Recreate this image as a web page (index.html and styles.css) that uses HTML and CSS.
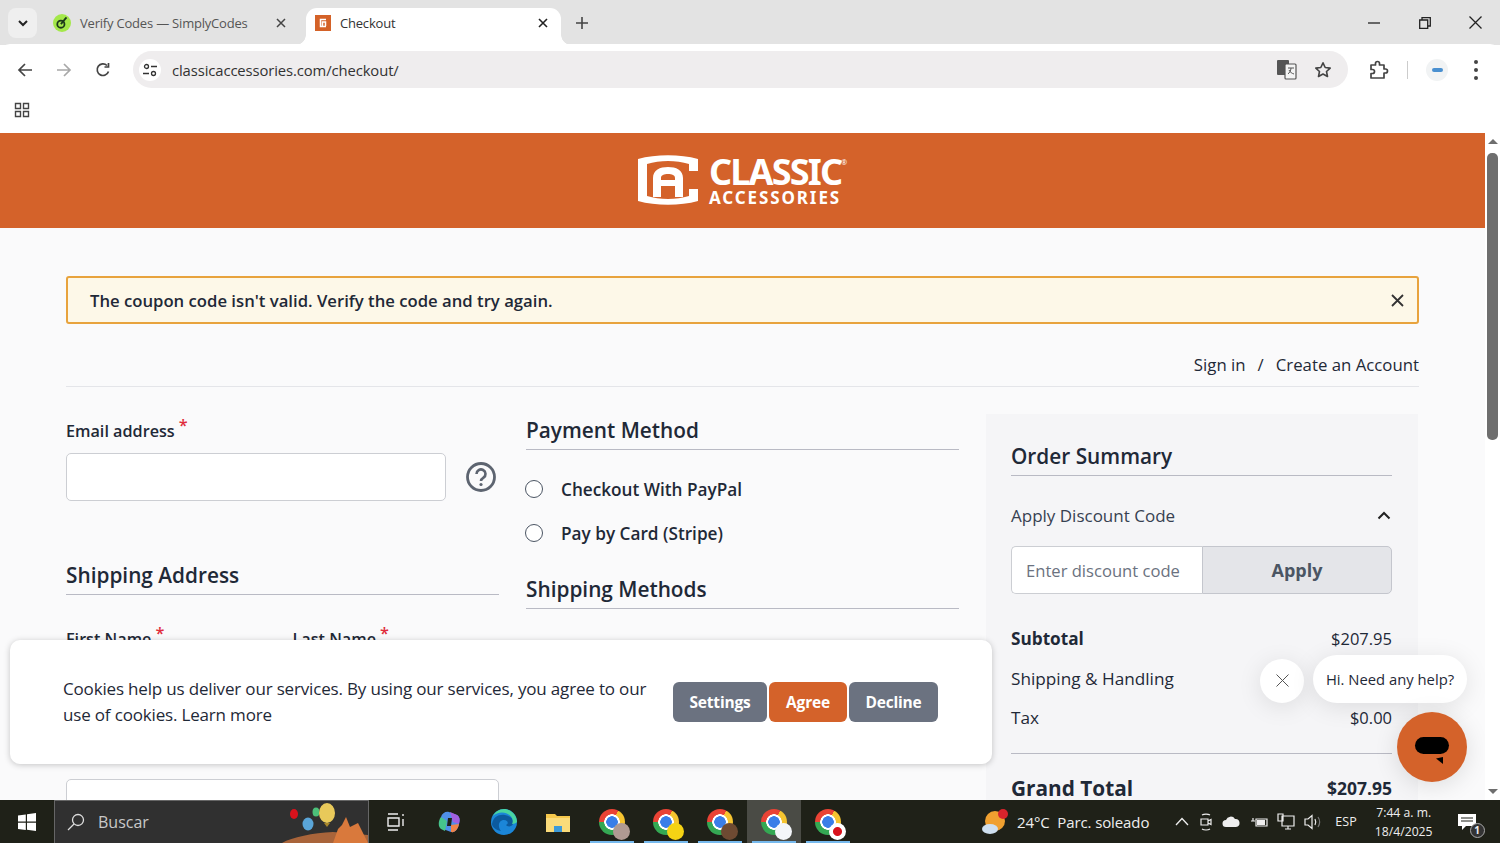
FILE: index.html
```html
<!DOCTYPE html>
<html lang="en">
<head>
    <meta charset="UTF-8">
    <title>Checkout</title>
    <link rel="stylesheet" href="styles.css">
</head>
<body>

    <!-- Browser tabs -->
    <div class="tabstrip">
        <div class="tab-search">
            <svg width="12" height="12" viewBox="0 0 12 12"><path d="M2 4l4 4 4-4" fill="none" stroke="#222" stroke-width="2"/></svg>
        </div>
        <div class="tab">
            <svg class="favicon" width="18" height="18" viewBox="0 0 16 16"><circle cx="8" cy="8" r="8" fill="#a4e84a"/><circle cx="7" cy="9" r="3.2" fill="none" stroke="#1d3a1a" stroke-width="1.6"/><path d="M7 9l5-6" stroke="#1d3a1a" stroke-width="1.6"/></svg>
            <span class="tab-title">Verify Codes — SimplyCodes</span>
            <svg class="tab-close" width="10" height="10" viewBox="0 0 10 10"><path d="M1 1l8 8M9 1l-8 8" stroke="#444" stroke-width="1.5"/></svg>
        </div>
        <div class="tab tab-active">
            <svg class="favicon" width="16" height="16" viewBox="0 0 16 16"><rect width="16" height="16" fill="#d46228"/><path d="M11 4.500H5.500v7H11M7.500 11V7h3v4" fill="none" stroke="#fff" stroke-width="1.5"/></svg>
            <span class="tab-title">Checkout</span>
            <svg class="tab-close" width="10" height="10" viewBox="0 0 10 10"><path d="M1 1l8 8M9 1l-8 8" stroke="#222" stroke-width="1.6"/></svg>
        </div>
        <svg class="new-tab" width="12" height="12" viewBox="0 0 12 12"><path d="M6 0v12M0 6h12" stroke="#444" stroke-width="1.6"/></svg>
        <div class="window-buttons">
            <svg width="12" height="12" viewBox="0 0 12 12"><path d="M0 6h12" stroke="#222" stroke-width="1.3"/></svg>
            <svg width="12" height="12" viewBox="0 0 12 12"><path d="M.7 3h8v8.300h-8zM3 3V.7h8.300V9H8.700" fill="none" stroke="#222" stroke-width="1.300"/></svg>
            <svg width="13" height="13" viewBox="0 0 13 13"><path d="M.5.5l12 12M12.500.5l-12 12" stroke="#222" stroke-width="1.300"/></svg>
        </div>
    </div>

    <!-- Address bar -->
    <div class="toolbar">
        <svg class="nav-icon" width="16" height="16" viewBox="0 0 16 16"><path d="M15 8H2M8 2L2 8l6 6" fill="none" stroke="#444" stroke-width="1.700"/></svg>
        <svg class="nav-icon" width="16" height="16" viewBox="0 0 16 16"><path d="M1 8h13M8 2l6 6-6 6" fill="none" stroke="#a8a8a8" stroke-width="1.700"/></svg>
        <svg class="nav-icon" width="16" height="16" viewBox="0 0 16 16"><path d="M13.500 9.500A5.800 5.800 0 1 1 12 3.500M13.500 1v4h-4" fill="none" stroke="#444" stroke-width="1.700"/></svg>
        <div class="omnibox">
            <span class="site-info">
                <svg width="14" height="14" viewBox="0 0 14 14"><circle cx="3.500" cy="3.500" r="2" fill="none" stroke="#333" stroke-width="1.300"/><path d="M8 3.500h6M0 10.500h6" stroke="#333" stroke-width="1.300"/><circle cx="10.500" cy="10.500" r="2" fill="none" stroke="#333" stroke-width="1.300"/></svg>
            </span>
            <span class="url">classicaccessories.com/checkout/</span>
            <svg class="omni-translate" width="20" height="20" viewBox="0 0 20 20"><rect x="0" y="0" width="12" height="15" rx="1" fill="#555"/><rect x="8" y="4" width="11" height="15" rx="1" fill="#f4f4f4" stroke="#555" stroke-width="1.200"/><path d="M3 7.500h5M11 8h6M14 8c0 3-2 5-3 6M12 10c1 2 3 3.500 5 4" fill="none" stroke="#555" stroke-width="1"/></svg>
            <svg class="omni-star" width="18" height="18" viewBox="0 0 18 18"><path d="M9 1.800l2.200 4.700 5 .6-3.700 3.400 1 5L9 13l-4.500 2.500 1-5L1.800 7.100l5-.6z" fill="none" stroke="#444" stroke-width="1.600" stroke-linejoin="round"/></svg>
        </div>
        <svg class="extensions" width="20" height="20" viewBox="0 0 20 20"><path d="M2 5h4.500V3.500a2 2 0 0 1 4 0V5H15v4h1.500a2 2 0 0 1 0 4H15v5H2v-4.500h1.500a2 2 0 0 0 0-4H2z" fill="none" stroke="#444" stroke-width="1.700" stroke-linejoin="round"/></svg>
        <span class="toolbar-sep"></span>
        <span class="profile"><span class="profile-dot"></span></span>
        <span class="menu-dots"><i></i><i></i><i></i></span>
    </div>

    <!-- Bookmarks bar -->
    <div class="bookmarks">
        <svg width="16" height="16" viewBox="0 0 16 16"><path d="M1.500 1.500h5v5h-5zM9.500 1.500h5v5h-5zM1.500 9.500h5v5h-5zM9.500 9.500h5v5h-5z" fill="none" stroke="#444" stroke-width="1.400"/></svg>
    </div>

    <!-- Page viewport -->
    <div class="viewport">
        <div class="page">
            <header class="site-header">
                <div class="logo">
                    <svg class="logo-mark" width="60" height="54" viewBox="0 0 60 54">
                        <path d="M0 6C18 1 42 1 60 6V18H51V11C38 7 22 7 9 11V43C22 47 38 47 51 43V36H60V48C42 53 18 53 0 48Z" fill="#fff"/>
                        <path d="M15 44V25C15 17 22 14 30 14 38 14 45 17 45 25V44H37V33H23V44ZM23 27H37V25C37 22 34 21 30 21S23 22 23 25Z" fill="#fff"/>
                    </svg>
                    <div class="logo-text">
                        <span class="logo-classic">CLASSIC<sup>®</sup></span>
                        <span class="logo-accessories">ACCESSORIES</span>
                    </div>
                </div>
            </header>

            <main class="checkout">
                <div class="alert">
                    <span>The coupon code isn't valid. Verify the code and try again.</span>
                    <svg width="13" height="13" viewBox="0 0 13 13"><path d="M1 1l11 11M12 1L1 12" stroke="#333" stroke-width="1.800"/></svg>
                </div>

                <div class="account-links">
                    <a>Sign in</a><span class="slash">/</span><a>Create an Account</a>
                </div>

                <div class="columns">
                    <!-- Left column -->
                    <section class="col-left">
                        <label class="field-label">Email address<em>*</em></label>
                        <div class="email-row">
                            <div class="input email-input"></div>
                            <svg width="30" height="30" viewBox="0 0 30 30"><circle cx="15" cy="15" r="13.500" fill="none" stroke="#5d6470" stroke-width="2.800"/><path d="M10.500 12a4.500 4.500 0 1 1 7 3.700c-1.500 1-2.500 1.800-2.500 3.300" fill="none" stroke="#5d6470" stroke-width="2.600"/><circle cx="15" cy="22.500" r="1.600" fill="#5d6470"/></svg>
                        </div>
                        <h2 class="section-title shipping-title">Shipping Address</h2>
                        <div class="name-row">
                            <div class="name-field">
                                <label class="field-label">First Name<em>*</em></label>
                                <div class="input"></div>
                            </div>
                            <div class="name-field">
                                <label class="field-label">Last Name<em>*</em></label>
                                <div class="input"></div>
                            </div>
                        </div>
                        <label class="field-label">Company</label>
                        <div class="input"></div>
                    </section>

                    <!-- Middle column -->
                    <section class="col-middle">
                        <h2 class="section-title">Payment Method</h2>
                        <div class="radio-row"><span class="radio"></span>Checkout With PayPal</div>
                        <div class="radio-row"><span class="radio"></span>Pay by Card (Stripe)</div>
                        <h2 class="section-title methods-title">Shipping Methods</h2>
                    </section>

                    <!-- Order summary -->
                    <aside class="summary">
                        <h2 class="section-title">Order Summary</h2>
                        <div class="discount-toggle">
                            <span>Apply Discount Code</span>
                            <svg width="14" height="9" viewBox="0 0 14 9"><path d="M1.500 7.500L7 2l5.500 5.500" fill="none" stroke="#222" stroke-width="2"/></svg>
                        </div>
                        <div class="discount-form">
                            <div class="discount-input">Enter discount code</div>
                            <div class="discount-apply">Apply</div>
                        </div>
                        <div class="total-row total-bold"><span>Subtotal</span><span class="amount">$207.95</span></div>
                        <div class="total-row"><span>Shipping &amp; Handling</span><span class="amount">$0.00</span></div>
                        <div class="total-row"><span>Tax</span><span class="amount">$0.00</span></div>
                        <div class="total-row grand-total"><span>Grand Total</span><span class="amount">$207.95</span></div>
                    </aside>
                </div>
            </main>

            <!-- Cookie banner -->
            <div class="cookie-banner">
                <p>Cookies help us deliver our services. By using our services, you agree to our use of cookies. Learn more</p>
                <div class="cookie-buttons">
                    <span class="cookie-btn btn-settings">Settings</span>
                    <span class="cookie-btn btn-agree">Agree</span>
                    <span class="cookie-btn btn-decline">Decline</span>
                </div>
            </div>

            <!-- Chat widget -->
            <div class="chat-widget">
                <div class="chat-row">
                    <span class="chat-close">
                        <svg width="13" height="13" viewBox="0 0 13 13"><path d="M.5.5l12 12M12.500.5l-12 12" stroke="#555" stroke-width="1"/></svg>
                    </span>
                    <span class="chat-bubble">Hi. Need any help?</span>
                </div>
                <div class="chat-launcher">
                    <svg width="36" height="30" viewBox="0 0 36 30"><rect x="1" y="0" width="34" height="17" rx="8.500" fill="#000"/><path d="M22 21.500l7-1.500v7z" fill="#000"/></svg>
                </div>
            </div>
        </div>

        <div class="scrollbar">
            <span class="arrow-up"></span>
            <div class="scroll-track"><div class="scroll-thumb"></div></div>
            <span class="arrow-down"></span>
        </div>
    </div>

    <!-- Windows taskbar -->
    <footer class="taskbar">
        <div class="start">
            <svg width="18" height="18" viewBox="0 0 18 18"><path d="M0 2.500l7.800-1.100v7.200H0zM9 1.200L18 0v8.600H9zM0 9.800h7.800V17L0 15.900zM9 9.800h9V18l-9-1.200z" fill="#fff"/></svg>
        </div>
        <div class="search-box">
            <svg width="18" height="18" viewBox="0 0 18 18"><circle cx="11" cy="7" r="5.500" fill="none" stroke="#ddd" stroke-width="1.300"/><path d="M7 11l-6 6" stroke="#ddd" stroke-width="1.300"/></svg>
            <span class="search-text">Buscar</span>
            <svg class="search-art" width="90" height="42" viewBox="0 0 90 42">
                <ellipse cx="16" cy="13" rx="4" ry="5" fill="#d8121c"/>
                <ellipse cx="30" cy="23" rx="5.500" ry="6.500" fill="#5aa5d8"/>
                <ellipse cx="38" cy="11" rx="3.500" ry="4.500" fill="#4cc07a"/>
                <ellipse cx="49" cy="12" rx="8" ry="10" fill="#e8c95a"/>
                <path d="M46 22h6l-3 4z" fill="#a8862a"/>
                <path d="M4 42C14 36 35 32 55 31L90 34V42Z" fill="#a9643a"/>
                <path d="M55 42L60 28 64 24 68 16 72 26 76 24 80 22 84 30 90 42Z" fill="#d9793c"/>
            </svg>
        </div>
        <div class="task-slot">
            <svg width="18" height="18" viewBox="0 0 18 18"><path d="M1 1h10M1 17h10M1 5h11v8H1zM16 1v2M16 6v7" fill="none" stroke="#eee" stroke-width="1.400"/></svg>
        </div>
        <div class="task-slot">
            <svg width="26" height="26" viewBox="0 0 26 26"><path d="M4 8c1-4 5-6 8-5l8 3c3 2 3 5 2 9-1 5-4 9-8 8l-8-3c-3-2-3-8-2-12z" fill="#4f8fe8"/><path d="M13 3l7 3c3 2 3 5 2 9l-6-2z" fill="#a15ee0"/><path d="M4 20c-3-2-3-8 0-12l6 4-2 10z" fill="#46c48c"/><path d="M14 23c4 1 7-3 8-8l-8 1z" fill="#f0844a"/><path d="M11 9h4l-1 8h-4z" fill="#1f2118"/></svg>
        </div>
        <div class="task-slot">
            <svg width="28" height="28" viewBox="0 0 28 28"><circle cx="14" cy="14" r="13" fill="#1b86d8"/><path d="M2 16C3 9 9 6 15 7c6 1 9 5 8 9-1 3-6 3-7 1 3-1 2-5-2-5-5 0-7 6-3 11-5-1-9-4-9-7z" fill="#0c5a9e"/><path d="M27 14c0-7-6-13-13-13C9 1 5 4 3 8c5-5 15-5 19 2 1 2 1 4 0 6 2 0 4-1 5-2z" fill="#49d4a0"/></svg>
        </div>
        <div class="task-slot">
            <svg width="24" height="20" viewBox="0 0 24 20"><path d="M0 2h9l2 2h13v16H0z" fill="#f5c84c"/><path d="M0 6h24v14H0z" fill="#fadb7a"/><path d="M8 14h8v6H8z" fill="#3d9ad8"/></svg>
        </div>
        <div class="task-slot task-open"><span class="chrome-icon"><span class="chrome-badge badge-photo"></span></span></div>
        <div class="task-slot task-open"><span class="chrome-icon"><span class="chrome-badge badge-yellow"></span></span></div>
        <div class="task-slot task-open"><span class="chrome-icon"><span class="chrome-badge badge-brown"></span></span></div>
        <div class="task-slot task-open task-current"><span class="chrome-icon"><span class="chrome-badge badge-white"></span></span></div>
        <div class="task-slot task-open"><span class="chrome-icon"><span class="chrome-badge badge-red"></span></span></div>

        <div class="weather">
            <svg width="28" height="28" viewBox="0 0 28 28"><circle cx="14" cy="13" r="10" fill="#f0a030"/><ellipse cx="9" cy="21" rx="8" ry="5" fill="#cfe0f0"/><circle cx="22" cy="6" r="5" fill="#d8242c"/></svg>
            <span class="weather-text">24°C&nbsp; Parc. soleado</span>
        </div>
        <div class="tray">
            <svg width="14" height="9" viewBox="0 0 14 9"><path d="M1 8l6-6.500L13 8" fill="none" stroke="#eee" stroke-width="1.300"/></svg>
            <svg width="14" height="18" viewBox="0 0 14 18"><path d="M2 6h7v6H2zM9 8l3-1.500v5L9 10M3 2c2-1.300 6-1.300 8 0M3 16c2 1.300 6 1.300 8 0" fill="none" stroke="#eee" stroke-width="1.200"/></svg>
            <svg width="18" height="12" viewBox="0 0 18 12"><path d="M4 11a3.500 3.500 0 0 1 0-7 5 5 0 0 1 9-1 4 4 0 0 1 1 8z" fill="#eee"/></svg>
            <svg width="18" height="14" viewBox="0 0 18 14"><path d="M6 4h11v7H6zM1 6h4M3 3v3" fill="none" stroke="#eee" stroke-width="1.200"/><path d="M7 5h8v5H7z" fill="#eee"/></svg>
            <svg width="18" height="18" viewBox="0 0 18 18"><path d="M5 3h12v10H5zM1 1h5v7H1zM8 16h6M11 13v3" fill="none" stroke="#eee" stroke-width="1.200"/></svg>
            <svg width="18" height="16" viewBox="0 0 18 16"><path d="M1 5h3l4-3.500v13L4 11H1zM11 5c1 2 1 4 0 6" fill="none" stroke="#eee" stroke-width="1.200"/><path d="M14 3c2 3 2 7 0 10" fill="none" stroke="#777" stroke-width="1.200"/></svg>
        </div>
        <span class="lang">ESP</span>
        <div class="clock"><span>7:44 a. m.</span><span>18/4/2025</span></div>
        <div class="notifications">
            <svg width="18" height="16" viewBox="0 0 18 16"><path d="M0 0h18v12H8l-4 4v-4H0z" fill="#fff"/><path d="M3 4h12M3 7h12" stroke="#1f2118" stroke-width="1.200"/></svg>
            <span class="notif-count">1</span>
        </div>
    </footer>

</body>
</html>
```

FILE: styles.css
```css
/* General Reset */
* {
    margin: 0;
    padding: 0;
    box-sizing: border-box;
}

body {
    width: 1500px;
    height: 843px;
    overflow: hidden;
    display: flex;
    flex-direction: column;
    background: #fff;
    color: #1f2937;
    font-family: 'Open Sans', 'Noto Sans', sans-serif;
}

/* Browser tabs */
.tabstrip {
    height: 45px;
    flex: none;
    display: flex;
    align-items: flex-end;
    padding-left: 8px;
    background: #e3e3e3;
}

.tab-search {
    width: 29px;
    height: 30px;
    margin-bottom: 7px;
    border-radius: 8px;
    display: flex;
    align-items: center;
    justify-content: center;
    background: #efefef;
}

.tab {
    width: 269px;
    height: 37px;
    display: flex;
    align-items: center;
    padding: 0 20px 8px 16px;
    font-size: 13px;
    color: #555;
    letter-spacing: -0.2px;
}

.tab-active {
    position: relative;
    width: 255px;
    background: #fff;
    border-radius: 11px 11px 0 0;
    color: #333;
    padding: 0 13px 8px 9px;
}

/* Curved feet at the bottom of the active tab */
.tab-active::before,
.tab-active::after {
    content: '';
    position: absolute;
    bottom: 0;
    width: 10px;
    height: 10px;
}

.tab-active::before {
    left: -10px;
    background: radial-gradient(circle at 0 0, transparent 9.500px, #fff 10px);
}

.tab-active::after {
    right: -10px;
    background: radial-gradient(circle at 100% 0, transparent 9.500px, #fff 10px);
}

.tab-title {
    flex: 1;
    margin-left: 9px;
}

.new-tab {
    margin: 0 0 16px 15px;
}

.window-buttons {
    margin-left: auto;
    width: 132px;
    height: 45px;
    padding: 0 18px 0 0;
    display: flex;
    align-items: center;
    justify-content: space-between;
}

/* Address bar */
.toolbar {
    height: 51px;
    flex: none;
    display: flex;
    align-items: center;
    padding: 0 14px 0 17px;
    background: #fff;
    border-radius: 10px 10px 0 0;
    margin-top: -1px;
}

.nav-icon {
    margin-right: 23px;
}

.omnibox {
    width: 1215px;
    height: 37px;
    margin-left: -1px;
    display: flex;
    align-items: center;
    padding-left: 6px;
    border-radius: 19px;
    background: #efedee;
}

.site-info {
    width: 22px;
    height: 22px;
    border-radius: 50%;
    background: #fff;
    display: flex;
    align-items: center;
    justify-content: center;
}

.url {
    flex: 1;
    margin-left: 11px;
    font-size: 14.800px;
    color: #333;
    letter-spacing: -0.1px;
}

.omni-translate {
    margin-right: 17px;
}

.omni-star {
    margin-right: 16px;
}

.extensions {
    margin-left: 21px;
}

.toolbar-sep {
    width: 1px;
    height: 18px;
    margin-left: 18px;
    background: #ccc;
}

.profile {
    width: 22px;
    height: 22px;
    margin-left: 18px;
    border-radius: 50%;
    background: #f1f3f4;
    display: flex;
    align-items: center;
    justify-content: center;
}

.profile-dot {
    width: 11px;
    height: 4px;
    border-radius: 2px;
    background: #4a90d0;
}

.menu-dots {
    margin-left: 26px;
    display: flex;
    flex-direction: column;
    gap: 4px;
}

.menu-dots i {
    width: 4px;
    height: 4px;
    border-radius: 50%;
    background: #444;
}

/* Bookmarks bar */
.bookmarks {
    height: 38px;
    flex: none;
    display: flex;
    align-items: flex-start;
    padding: 7px 0 0 14px;
    background: #fff;
}

/* Page viewport */
.viewport {
    height: 667px;
    flex: none;
    display: flex;
    overflow: hidden;
}

.page {
    width: 1485px;
    position: relative;
    overflow: hidden;
    background: #fafafb;
}

.site-header {
    height: 95px;
    display: flex;
    align-items: center;
    justify-content: center;
    background: #d4622a;
}

.logo {
    display: flex;
    align-items: center;
    gap: 11px;
    color: #fff;
}

.logo-mark {
    margin-top: -2px;
}

.logo-text {
    display: flex;
    flex-direction: column;
    line-height: 1;
}

.logo-classic {
    font-family: 'Noto Sans', sans-serif;
    font-size: 36px;
    font-weight: 700;
    letter-spacing: -1.800px;
    line-height: 34px;
}

.logo-classic sup {
    font-size: 7px;
    font-weight: 400;
    letter-spacing: 0;
    vertical-align: 20px;
    line-height: 0;
}

.logo-accessories {
    font-family: 'Noto Sans', sans-serif;
    font-size: 17px;
    font-weight: 700;
    letter-spacing: 1.900px;
    line-height: 18px;
}

/* Checkout content */
.checkout {
    padding: 48px 66px 0;
}

.alert {
    width: 1353px;
    height: 48px;
    padding: 0 13px 0 22px;
    display: flex;
    align-items: center;
    justify-content: space-between;
    background: #fdf8e8;
    border: 2px solid #e8a33d;
    border-radius: 3px;
    font-size: 16.700px;
    font-weight: 600;
    color: #1f2937;
}

.account-links {
    width: 1353px;
    height: 63px;
    padding-top: 18px;
    display: flex;
    justify-content: flex-end;
    align-items: center;
    border-bottom: 1px solid #e4e5e9;
    font-size: 16.800px;
    color: #1f2937;
}

.slash {
    margin: 0 12px;
}

.columns {
    display: flex;
    gap: 27px;
    width: 1353px;
    margin-top: 27px;
}

.col-left,
.col-middle {
    width: 433px;
    flex: none;
}

.field-label {
    display: block;
    font-size: 16.200px;
    font-weight: 600;
    line-height: 22px;
    color: #1f2937;
}

.field-label em {
    position: relative;
    top: -6px;
    margin-left: 4px;
    font-style: normal;
    color: #e02d3c;
}

.col-left > .field-label:first-child {
    padding-top: 6px;
}

.input {
    height: 48px;
    margin-top: 11px;
    background: #fff;
    border: 1px solid #ccced3;
    border-radius: 5px;
}

.email-row {
    display: flex;
    align-items: center;
    gap: 20px;
}

.email-input {
    width: 380px;
    margin-top: 11px;
}

.email-row svg {
    margin-top: 11px;
}

.section-title {
    height: 36px;
    font-size: 20.800px;
    font-weight: 600;
    line-height: 32px;
    color: #1f2937;
    border-bottom: 1px solid #b9bac4;
}

.shipping-title {
    margin-top: 58px;
}

.name-row {
    display: flex;
    gap: 20px;
    margin-top: 33px;
    margin-bottom: 31px;
}

.name-field {
    flex: 1;
}

.name-row .input {
    height: 48px;
}

.col-left > .input:last-child {
    margin-top: 17px;
}

.col-middle .section-title {
    margin-top: 0;
}

.radio-row {
    display: flex;
    align-items: center;
    height: 44px;
    font-size: 17.200px;
    font-weight: 600;
    color: #1f2937;
}

.col-middle .section-title + .radio-row {
    margin-top: 17px;
}

.radio {
    width: 18px;
    height: 18px;
    margin: 0 18px 0 -1px;
    border: 1.500px solid #4b5563;
    border-radius: 50%;
    background: #fff;
}

.methods-title {
    margin-top: 18px !important;
}

/* Order summary */
.summary {
    width: 432px;
    flex: none;
    padding: 26px 26px 30px 25px;
    background: #f5f5f7;
}

.discount-toggle {
    height: 40px;
    margin-top: 19px;
    display: flex;
    align-items: center;
    justify-content: space-between;
    padding-right: 1px;
    font-size: 17px;
    color: #374151;
}

.discount-form {
    display: flex;
    height: 48px;
    margin-top: 11px;
}

.discount-input {
    width: 191px;
    padding-left: 14px;
    display: flex;
    align-items: center;
    background: #fff;
    border: 1px solid #ccced3;
    border-right: none;
    border-radius: 5px 0 0 5px;
    font-size: 16.600px;
    color: #6b7280;
}

.discount-apply {
    flex: 1;
    display: flex;
    align-items: center;
    justify-content: center;
    background: #e4e5e9;
    border: 1px solid #c4c6cd;
    border-radius: 0 5px 5px 0;
    font-size: 18px;
    font-weight: 700;
    color: #4b5563;
}

.total-row {
    height: 39.500px;
    display: flex;
    align-items: center;
    justify-content: space-between;
    font-size: 17.200px;
    color: #1f2937;
}

.discount-form + .total-row {
    margin-top: 25px;
}

.total-bold {
    font-weight: 700;
}

.amount {
    font-size: 16.500px;
    font-weight: 400;
}

.grand-total {
    height: 56px;
    margin-top: 15px;
    padding-top: 14px;
    border-top: 1px solid #b9bac4;
    font-size: 20.800px;
    font-weight: 700;
}

.grand-total .amount {
    font-size: 17.500px;
    font-weight: 700;
}

/* Cookie banner */
.cookie-banner {
    position: absolute;
    left: 10px;
    top: 507px;
    width: 982px;
    height: 124px;
    padding: 0 54px 0 53px;
    display: flex;
    align-items: center;
    justify-content: space-between;
    background: #fff;
    border-radius: 10px;
    box-shadow: 0 1px 6px rgba(0, 0, 0, 0.22);
}

.cookie-banner p {
    width: 595px;
    font-size: 17px;
    line-height: 26px;
    color: #1f2937;
    letter-spacing: -0.17px;
}

.cookie-buttons {
    display: flex;
    gap: 2px;
}

.cookie-btn {
    height: 40px;
    display: flex;
    align-items: center;
    justify-content: center;
    border-radius: 6px;
    font-size: 15.500px;
    font-weight: 700;
    color: #fff;
    letter-spacing: -0.2px;
}

.btn-settings {
    width: 94px;
    background: #6b7280;
}

.btn-agree {
    width: 78px;
    background: #d4622a;
}

.btn-decline {
    width: 89px;
    background: #6b7280;
}

/* Chat widget */
.chat-widget {
    position: absolute;
    left: 1260px;
    top: 522px;
    width: 207px;
    display: flex;
    flex-direction: column;
    align-items: flex-end;
}

.chat-row {
    width: 100%;
    display: flex;
    align-items: center;
    justify-content: space-between;
}

.chat-close {
    width: 44px;
    height: 44px;
    margin-top: 3px;
    border-radius: 50%;
    background: #fff;
    display: flex;
    align-items: center;
    justify-content: center;
    box-shadow: 0 4px 24px rgba(0, 0, 0, 0.1);
}

.chat-bubble {
    width: 154px;
    height: 48px;
    display: flex;
    align-items: center;
    justify-content: center;
    background: #fff;
    border-radius: 24px;
    font-size: 14.800px;
    color: #1f2937;
    box-shadow: 0 4px 24px rgba(0, 0, 0, 0.1);
}

.chat-launcher {
    width: 70px;
    height: 70px;
    margin-top: 9px;
    padding-top: 10px;
    border-radius: 50%;
    background: #d4622a;
    display: flex;
    align-items: center;
    justify-content: center;
    box-shadow: 0 4px 24px rgba(0, 0, 0, 0.12);
}

/* Scrollbar */
.scrollbar {
    width: 15px;
    flex: none;
    display: flex;
    flex-direction: column;
    align-items: center;
    background: #fff;
}

.arrow-up,
.arrow-down {
    flex: none;
    margin: 6px 0;
    border-left: 5px solid transparent;
    border-right: 5px solid transparent;
}

.arrow-up {
    border-bottom: 5px solid #6e6e6e;
}

.arrow-down {
    border-top: 5px solid #6e6e6e;
}

.scroll-track {
    flex: 1;
    width: 100%;
    display: flex;
    justify-content: center;
    padding-top: 3px;
}

.scroll-thumb {
    width: 11px;
    height: 287px;
    border-radius: 5px;
    background: #6e6e6e;
}

/* Windows taskbar */
.taskbar {
    height: 43px;
    flex: none;
    display: flex;
    align-items: center;
    background: #1f2118;
    color: #eee;
}

.start {
    width: 54px;
    height: 100%;
    display: flex;
    align-items: center;
    justify-content: center;
}

.search-box {
    width: 315px;
    height: 100%;
    position: relative;
    display: flex;
    align-items: center;
    padding-left: 12px;
    background: #303030;
    border: 1px solid #666;
    border-bottom: none;
}

.search-text {
    margin-left: 13px;
    font-size: 16px;
    color: #c9c9c9;
}

.search-art {
    position: absolute;
    right: 0;
    bottom: 0;
}

.task-slot {
    width: 54px;
    height: 100%;
    position: relative;
    display: flex;
    align-items: center;
    justify-content: center;
}

.task-open::after {
    content: '';
    position: absolute;
    left: 5px;
    right: 5px;
    bottom: 0;
    height: 2px;
    background: #76b9ed;
}

.task-current {
    background: #4a4b45;
}

.chrome-icon {
    width: 26px;
    height: 26px;
    position: relative;
    border-radius: 50%;
    background:
        radial-gradient(circle, #3a7ee8 0 5.500px, #fff 6px 7.500px, transparent 8px),
        conic-gradient(from 30deg, #f6c430 0 120deg, #34a853 120deg 240deg, #ea4335 240deg 360deg);
}

.chrome-badge {
    position: absolute;
    right: -5px;
    bottom: -5px;
    width: 17px;
    height: 17px;
    border-radius: 50%;
}

.badge-photo { background: #b09a92; }
.badge-yellow { background: #f5d314; }
.badge-brown { background: #6e4a32; }
.badge-white { background: #f4f6fa; }
.badge-red { background: radial-gradient(circle, #d8121c 0 4px, #fff 5px); }

.weather {
    margin-left: 126px;
    display: flex;
    align-items: center;
    gap: 8px;
    font-size: 15px;
    letter-spacing: -0.1px;
}

.tray {
    width: 147px;
    margin-left: 26px;
    display: flex;
    align-items: center;
    justify-content: space-between;
}

.lang {
    margin-left: 13px;
    font-size: 12.500px;
}

.clock {
    width: 80px;
    margin-left: 7px;
    display: flex;
    flex-direction: column;
    align-items: center;
    gap: 4px;
    font-size: 12.200px;
    line-height: 15px;
}

.notifications {
    position: relative;
    margin-left: 14px;
    display: flex;
}

.notif-count {
    position: absolute;
    right: -9px;
    bottom: -8px;
    width: 15px;
    height: 15px;
    border-radius: 50%;
    background: #333;
    border: 1px solid #aaa;
    display: flex;
    align-items: center;
    justify-content: center;
    font-size: 10px;
    font-weight: 700;
}
```
